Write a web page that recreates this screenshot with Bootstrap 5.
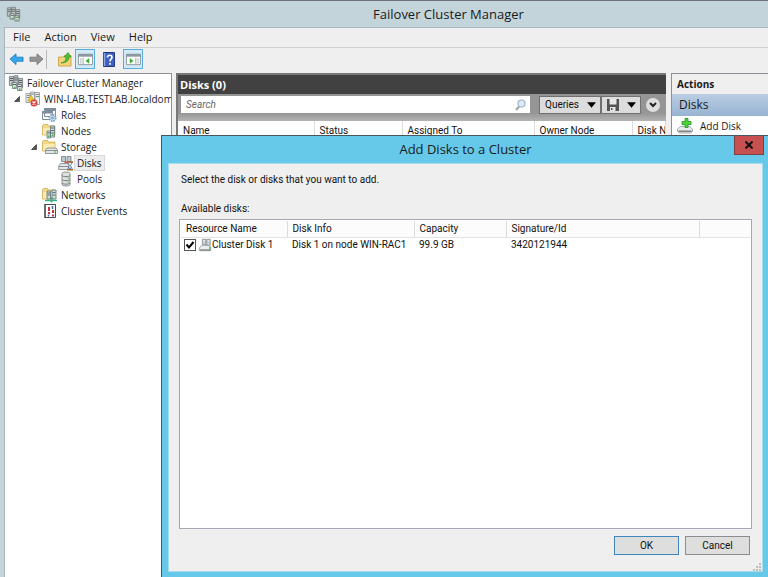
<!DOCTYPE html>
<html lang="en">
<head>
<meta charset="utf-8">
<meta name="viewport" content="width=device-width, initial-scale=1">
<title>Failover Cluster Manager</title>
<link href="https://cdn.jsdelivr.net/npm/bootstrap@5.3.0/dist/css/bootstrap.min.css" rel="stylesheet">
<style>
  body { font-family: "Open Sans", "Noto Sans", sans-serif; font-size: 11px; line-height: 16px; color: #1a1a1a; background: #c3d5db; }
  button, input { font: inherit; color: inherit; border-radius: 0; }
  svg { flex: none; display: block; }
  .classic { font-family: Roboto, "Liberation Sans", sans-serif; font-size: 10px; color: #111; }
  .app { border-top: 1px solid #6c7078; }
  .app-title { height: 26px; padding-left: 6px; }
  .app-title h1 { padding-left: 108px; }
  .app-title h1, .dlg-title h2 { font-size: 13px; line-height: 26px; }
  .app-body { margin-left: 4px; border: solid #a9b6bc; border-width: 1px 0 0 1px; background: #efefef; }
  .menu { height: 20px; border-bottom: 1px solid #d0d0d0; padding: 0 0 2px 8px; gap: 14px; }
  .menu button, .tools button { border: 0; background: none; padding: 0; }
  .tools { height: 25px; padding: 0 0 3px 1px; }
  .tools button { width: 20px; height: 20px; display: flex; align-items: center; justify-content: center; }
  .tools .pressed { border: 1px solid #56aee0; background: #d5e9f6; }
  .tools .rule { width: 1px; height: 19px; background: #b8b8b8; }
  .panes { gap: 4px; }
  .tree { width: 167px; flex: none; background: #fff; border: solid #8b9097; border-width: 1px 1px 0 0; padding: 1px 0 0 3px; font-size: 10px; }
  .tree a { display: flex; height: 16px; align-items: center; color: inherit; text-decoration: none; white-space: nowrap; }
  .tree a span { padding: 0 3px; }
  .tree .exp { width: 16px; }
  .tree .l1 { padding-left: 1px; }
  .tree .l2 { padding-left: 34px; }
  .tree .l2x { padding-left: 18px; }
  .tree .l3 { padding-left: 50px; }
  .tree .picked { background: #ededed; outline: 1px solid #d9d9d9; outline-offset: -1px; }
  .center { background: #9b9b9b; border: solid #777; border-width: 2px 0 0 2px; margin-right: 1px; }
  .center h2 { height: 19px; font-size: 11px; line-height: 19px; font-weight: 700; color: #fff; background: #414141; padding-left: 2px; }
  .filter { height: 27px; padding: 2px 6px 0 3px; background: linear-gradient(#959595 70%, #b4b4b4); }
  .filter .box { background: #fff; height: 17px; margin-right: 9px; }
  .filter input { border: 0; outline: 0; padding: 0 5px; min-width: 0; font-style: italic; background: none; }
  .filter input::placeholder { color: #666; }
  .filter button { height: 18px; border: 1px solid #707070; background: #dcdcdc; padding: 0 4px 0 5px; }
  .filter .round { width: 14px; height: 14px; border: 0; border-radius: 50%; padding: 0; margin: 2px 0 0 5px; background: #dedede; }
  .grid { table-layout: fixed; width: 100%; line-height: 14px; white-space: nowrap; }
  .grid th { font-weight: 400; height: 16px; padding: 0 5px; border-right: 1px solid #dcdcdc; border-bottom: 1px solid #e4e4e4; overflow: hidden; background: #fcfcfc; }
  .grid td { padding: 0 5px; }
  .grid td:first-child { padding-left: 3px; }
  .center .grid th { height: 20px; padding-top: 1px; background: #fff; }
  .cw1 { width: 136px; } .cw2 { width: 88px; } .cw3 { width: 132px; } .cw4 { width: 98px; }
  .dw1 { width: 106px; } .dw2 { width: 127px; } .dw3 { width: 92px; } .dw4 { width: 193px; }
  .actions { width: 97px; flex: none; background: #fff; border: solid #8b9097; border-width: 1px 0 0 1px; font-size: 10px; }
  .actions h2 { background: #efefef; height: 20px; line-height: 20px; font-size: 10px; font-weight: 700; padding-left: 5px; }
  .actions h3 { height: 22px; line-height: 22px; font-size: 12px; font-weight: 400; padding-left: 7px; background: linear-gradient(#bacde2, #98b3d3); }
  .actions button { border: 0; background: none; padding: 2px 0 0 5px; gap: 7px; }
  .dlg { position: absolute; left: 161px; top: 135px; right: 0; bottom: 0; background: #66c9e9; border: solid #46565e; border-width: 1px 0 0 1px; padding: 0 5px 5px 6px; }
  .dlg-title { height: 27px; }
  .dlg .close { position: absolute; right: 4px; top: 0; width: 30px; height: 19px; border: 1px solid #7c3f42; border-top: 0; background: #c75050; padding: 0; }
  .dlg-body { background: #efefef; border: 1px solid #a7dced; padding: 8px 10px 16px; }
  .dlg-body p { margin: 0 2px 13px; }
  .dlg-body .list-label { margin-bottom: 2px; }
  .list { background: #fff; border: 1px solid #a5a8b0; padding: 1px; }
  .list .check { appearance: none; flex: none; width: 12px; height: 12px; margin: 0 2px 0 0; border: 1px solid #555; background: #fff; }
  .list .check:checked { background: #fff url("data:image/svg+xml,%3Csvg xmlns='http://www.w3.org/2000/svg' viewBox='0 0 10 10'%3E%3Cpath d='M1.500 4.500L4 7.500 8.500 2' fill='none' stroke='black' stroke-width='2'/%3E%3C/svg%3E") center / 10px 10px no-repeat; }
  .dlg-foot { gap: 6px; margin-top: 7px; padding-right: 2px; }
  .dlg-btn { width: 65px; height: 19px; line-height: 17px; border: 1px solid #8c8c8c; background: #dedede; padding: 0; }
  .dlg-btn.ok { border-color: #3e87bd; }
  .grip { position: absolute; right: 7px; bottom: 6px; }
</style>
</head>
<body class="vh-100 overflow-hidden">

<svg class="d-none" aria-hidden="true">
  <symbol id="i-cluster" viewBox="0 0 16 16">
    <path fill="#c4c9c9" stroke="#687376" stroke-width=".8" d="M1.4 1.4h4v9h-4zM6 .8h4v9H6zM10.6 3.4h4v9h-4z"/>
    <path stroke="#566265" d="M2 3.5h3M2 5.5h3M6.500 3h3M6.500 5h3M11 5.500h3M11 7.500h3"/>
    <path fill="#d9dddd" stroke="#687376" stroke-width=".8" d="M4.400 7.500h4v6h-4zM9.500 9.500h4.500v6H9.500z"/>
    <path stroke="#566265" d="M5 9.500h3M10 11.500h3.500"/>
    <path fill="#46b33c" d="M3 8h1.500v1.500H3zM6 12h1.500v1.500H6zM11 13.500h1.500V15H11zM13 10h1v1.500h-1z"/>
  </symbol>
  <symbol id="i-clerr" viewBox="0 0 16 16">
    <path fill="#eef0f0" stroke="#8a9395" stroke-width=".8" d="M1 2.500h4v9H1zM5.500 1h4v9h-4zM10 1.500h4.500v12H10z"/>
    <path stroke="#7c8789" d="M2 4.500h2.500M2 6.500h2.500M6 3h3M11 3.500h3M11 5.500h3"/>
    <path fill="#f5c62e" stroke="#b8891a" stroke-width=".5" d="M6 4l3.500 6h-7z"/>
    <circle cx="9" cy="12" r="3.500" fill="#d8423c"/><path stroke="#fff" stroke-width="1.200" d="M7.500 10.500l3 3m0-3l-3 3"/>
  </symbol>
  <symbol id="i-roles" viewBox="0 0 16 16">
    <path fill="#fff" stroke="#7f8c98" d="M2.500 1.500h11v8h-11zM.5 4.500h10v8H.5z"/>
    <path fill="#7d8d9e" d="M2 1h12v3H2zM0 4h11v2.500H0z"/>
    <circle cx="10.500" cy="11" r="3.200" fill="#d7e6f2" stroke="#6f9abd" stroke-width="1.800" stroke-dasharray="1.500 1"/><circle cx="10.500" cy="11" r="1.400" fill="#7aa7cb"/>
  </symbol>
  <symbol id="i-folder" viewBox="0 0 16 16">
    <path fill="#f0d889" stroke="#cfac51" stroke-width=".8" d="M.5 2.500l1-1h4l1 1.500h6.500v9H.5z"/><path fill="#f9ebb2" d="M1 5h11.500v6.500H1z"/>
  </symbol>
  <symbol id="i-nodes" viewBox="0 0 16 16">
    <use href="#i-folder" width="16" height="16"/>
    <path fill="#cfdcd8" stroke="#63757a" stroke-width=".8" d="M8.500 3h4v11h-4zM5 8h3.500v7H5z"/><path stroke="#587078" d="M9 5h3M9 7.500h3M9 10h3M5.500 10h2.500"/><path fill="#3fb548" d="M10 11.500h1.500V13H10zM6 12.500h1.500V14H6z"/>
  </symbol>
  <symbol id="i-storage" viewBox="0 0 16 16">
    <use href="#i-folder" width="16" height="16"/>
    <path fill="#e1e3e4" stroke="#7c8386" stroke-width=".8" d="M5 9h9l1.500 2v3.500h-12V11z"/><path stroke="#8d9497" d="M4 11.500h11"/><path fill="#43b545" d="M12 12.500h2v1h-2z"/>
  </symbol>
  <symbol id="i-disks" viewBox="0 0 16 16">
    <path fill="#bfc8ce" stroke="#6c7a84" stroke-width=".8" d="M3.500 1.500h4v5h-4zM9 1.500h4v5H9z"/>
    <path fill="#e4e6e7" stroke="#777f84" stroke-width=".8" d="M2.500 8.500h7l1 2v4H.7V11z"/><path stroke="#858d91" d="M1 11.500h9"/>
    <path fill="#eef6fc" stroke="#416b98" stroke-width=".8" d="M9.500 7h5l-2 3.500 2 4h-5l2-4z"/><path stroke="#b0652b" stroke-width="1.400" d="M9 7h6M9 14.800h6"/><path fill="#4a93d6" d="M10.500 14l1.500-2 1.500 2z"/><path fill="#d54a33" d="M6.500 6.500h3V8h-3z"/>
  </symbol>
  <symbol id="i-pools" viewBox="0 0 16 16">
    <path fill="#dde0df" stroke="#737b7b" stroke-width=".8" d="M4 2.500c0-2 8-2 8 0v11c0 2-8 2-8 0z"/>
    <path fill="none" stroke="#737b7b" d="M4 4.500c0 1.500 8 1.500 8 0M4 8.500c0 1.500 8 1.500 8 0M4 12c0 1.500 8 1.500 8 0"/><path fill="#58b558" d="M9.500 6.500H11v1H9.500zM9.500 10.500H11v1H9.500z"/>
  </symbol>
  <symbol id="i-net" viewBox="0 0 16 16">
    <use href="#i-folder" width="16" height="16"/>
    <path fill="#cfdcd8" stroke="#5f7276" stroke-width=".8" d="M5 4h3.500v8H5zM10 3h4v9h-4z"/><path stroke="#587078" d="M5.500 6h2.500M5.500 8h2.500M10.500 5.500h3M10.500 8h3"/>
    <path stroke="#36b08b" stroke-width="1.600" d="M3 13.500h12M9.500 10v5.500"/>
  </symbol>
  <symbol id="i-events" viewBox="0 0 16 16">
    <path fill="#fff" stroke="#444b55" d="M3 1.500h10.500v13H3z"/><path stroke="#333" stroke-width="2" stroke-dasharray="1 1" d="M3 1.500v13"/>
    <path stroke="#c8323b" stroke-width="2" d="M7 4v4M7 9v2M11 7v3M11 11.500v2"/><path stroke="#4467b4" stroke-width="1.500" d="M10.500 3v3M6.500 11.500v2"/>
  </symbol>
  <symbol id="i-drive" viewBox="0 0 16 16">
    <path fill="#ccd2d4" stroke="#788286" stroke-width=".8" d="M5 1.500h4v6H5zM10 1.500h4v7h-4z"/><path stroke="#f5f5f5" d="M6 3h2M11 3h2"/>
    <path fill="#eceeee" stroke="#8b9295" stroke-width=".8" d="M4 8.500h8l2.500 2v4H1.500v-3z"/><path fill="#777f82" d="M2 13h12v1.500H2z"/><path fill="#45b545" d="M13 10h1.500v3H13z"/>
  </symbol>
  <symbol id="i-add" viewBox="0 0 16 16">
    <path fill="#e9eaeb" stroke="#92979a" stroke-width=".8" d="M3.500 8.500h9l3 2.500v2.500l-2 1.500h-11l-2-1.500V11z"/><path fill="#7d8386" d="M1.500 12.500h13v1.500h-13z"/>
    <path fill="#4ed33c" stroke="#25951f" stroke-width=".8" d="M8 .5h3v3h3v3h-3v3H8v-3H5v-3h3z"/>
  </symbol>
  <symbol id="i-arrow" viewBox="0 0 16 16"><path stroke-width=".8" d="M1 8l6.500-5.500V6H15v4.500H7.500V14z"/></symbol>
  <symbol id="i-pane" viewBox="0 0 16 16">
    <path fill="#fff" stroke="#8c959d" d="M.5 2.500h15v11H.5z"/><path fill="#8c99a5" d="M0 2h16v3H0z"/><path stroke="#9aa4ad" d="M5.500 6v7"/><path stroke="#aaa" d="M2 7.500h2M2 9.500h2M2 11.500h2"/><path fill="#3eae33" d="M12 6.500v6L8 9.500z"/>
  </symbol>
  <symbol id="i-down" viewBox="0 0 10 6"><path d="M0 0h10L5 6z"/></symbol>
  <symbol id="i-exp" viewBox="0 0 6 6"><path fill="#555" stroke="#222" stroke-width=".6" d="M5.500.5v5h-5z"/></symbol>
</svg>

<div class="app d-flex flex-column h-100">
  <header class="app-title d-flex align-items-center">
    <svg width="15" height="16"><use href="#i-cluster"/></svg>
    <h1 class="m-0 flex-grow-1 text-center fw-normal">Failover Cluster Manager</h1>
  </header>

  <div class="app-body flex-grow-1 d-flex flex-column">
    <nav class="menu d-flex align-items-center" aria-label="Menu bar">
      <button type="button">File</button><button type="button">Action</button><button type="button">View</button><button type="button">Help</button>
    </nav>
    <div class="tools d-flex align-items-center" role="toolbar" aria-label="Toolbar">
      <button type="button" aria-label="Back"><svg width="15" height="16" fill="#35a7ec" stroke="#1778bd"><use href="#i-arrow"/></svg></button>
      <button type="button" aria-label="Forward"><svg width="15" height="16" fill="#949494" stroke="#737373" viewBox="0 0 16 16"><path stroke-width=".8" d="M15 8L8.500 2.500V6H1v4.500h7.500V14z"/></svg></button>
      <span class="rule me-2"></span>
      <button type="button" aria-label="Up one level"><svg width="14" height="15" viewBox="0 0 14 15"><path fill="#f3d477" stroke="#c39b3c" stroke-width=".8" d="M.5 5h5l1-1.500H13V14H.5z"/><path fill="#52bd38" stroke="#2f8a22" stroke-width=".6" d="M3 11c4-1 5-3 5-6H6l4-4.500L13 5h-2c0 4-3 6-8 6z"/></svg></button>
      <button type="button" class="pressed" aria-label="Show console tree"><svg width="15" height="15"><use href="#i-pane"/></svg></button>
      <button type="button" class="ms-1 me-1" aria-label="Help"><svg width="12" height="15" viewBox="0 0 12 15"><path fill="#3d5fc4" stroke="#24397f" d="M.5.5h11v14H.5z"/><path stroke="#8fa6e4" stroke-width="1.500" d="M1.500 1v13"/><path fill="none" stroke="#fff" stroke-width="1.700" d="M4.500 5.500c0-3 4.500-3 4.500 0C9 7 7 7 7 9.500M7 11v1.800"/></svg></button>
      <button type="button" class="pressed" aria-label="Show action pane"><svg width="15" height="15" viewBox="0 0 16 16"><path fill="#fff" stroke="#8c959d" d="M.5 2.500h15v11H.5z"/><path fill="#8c99a5" d="M0 2h16v3H0z"/><path stroke="#9aa4ad" d="M10.500 6v7"/><path stroke="#aaa" d="M12 7.500h2M12 9.500h2M12 11.500h2"/><path fill="#3eae33" d="M4 6.500v6l4-3z"/></svg></button>
    </div>

    <div class="panes d-flex flex-grow-1">
      <nav class="tree overflow-hidden" aria-label="Console tree">
        <a href="#"><svg width="16" height="16"><use href="#i-cluster"/></svg><span>Failover Cluster Manager</span></a>
        <a href="#" class="l1"><svg class="exp" height="6"><use href="#i-exp"/></svg><svg width="16" height="16"><use href="#i-clerr"/></svg><span>WIN-LAB.TESTLAB.localdomain</span></a>
        <a href="#" class="l2"><svg width="16" height="16"><use href="#i-roles"/></svg><span>Roles</span></a>
        <a href="#" class="l2"><svg width="16" height="16"><use href="#i-nodes"/></svg><span>Nodes</span></a>
        <a href="#" class="l2x"><svg class="exp" height="6"><use href="#i-exp"/></svg><svg width="16" height="16"><use href="#i-storage"/></svg><span>Storage</span></a>
        <a href="#" class="l3"><svg width="16" height="16"><use href="#i-disks"/></svg><span class="picked">Disks</span></a>
        <a href="#" class="l3"><svg width="16" height="16"><use href="#i-pools"/></svg><span>Pools</span></a>
        <a href="#" class="l2"><svg width="16" height="16"><use href="#i-net"/></svg><span>Networks</span></a>
        <a href="#" class="l2"><svg width="16" height="16"><use href="#i-events"/></svg><span>Cluster Events</span></a>
      </nav>

      <main class="center flex-grow-1 overflow-hidden">
        <h2 class="m-0">Disks (0)</h2>
        <div class="filter classic d-flex align-items-start">
          <div class="box d-flex align-items-center flex-grow-1 overflow-hidden">
            <input class="flex-grow-1" type="text" placeholder="Search" aria-label="Search disks">
            <svg class="me-1" width="11" height="12" viewBox="0 0 11 12"><path stroke="#a4a4a4" stroke-width="2" d="M4.500 7L1 11"/><circle cx="6.500" cy="4.500" r="3.500" fill="#dcebf7" stroke="#9cb4c9" stroke-width="1.200"/></svg>
          </div>
          <div class="d-flex">
            <button type="button" class="d-flex align-items-center gap-2">Queries <svg width="9" height="6"><use href="#i-down"/></svg></button>
            <button type="button" class="d-flex align-items-center gap-2" aria-label="Save query"><svg width="12" height="12" viewBox="0 0 12 12"><path fill="#555" d="M0 0h12v12H0z"/><path fill="#e6e6e6" d="M2.500 0h7v5.500h-7zM3 8h5.500v4H3z"/><path fill="#555" d="M4 9h1.500v2H4z"/></svg><svg width="9" height="6"><use href="#i-down"/></svg></button>
          </div>
          <button type="button" class="round d-flex align-items-center justify-content-center" aria-label="Expand"><svg width="8" height="6" viewBox="0 0 8 6"><path fill="none" stroke="#222" stroke-width="2" d="M1 1l3 3 3-3"/></svg></button>
        </div>
        <table class="grid classic">
          <thead><tr><th class="cw1">Name</th><th class="cw2">Status</th><th class="cw3">Assigned To</th><th class="cw4">Owner Node</th><th>Disk Number</th></tr></thead>
        </table>
      </main>

      <aside class="actions">
        <h2 class="m-0">Actions</h2>
        <h3 class="m-0">Disks</h3>
        <button type="button" class="d-flex align-items-center"><svg width="16" height="16"><use href="#i-add"/></svg>Add Disk</button>
      </aside>
    </div>
  </div>
</div>

<section class="dlg d-flex flex-column" role="dialog" aria-labelledby="dlgTitle">
  <div class="dlg-title"><h2 id="dlgTitle" class="m-0 text-center fw-normal">Add Disks to a Cluster</h2></div>
  <button type="button" class="close d-flex align-items-center justify-content-center" aria-label="Close"><svg width="8" height="8" viewBox="0 0 8 8"><path stroke="#111" stroke-width="2" d="M.5.5l7 7m0-7l-7 7"/></svg></button>
  <div class="dlg-body classic flex-grow-1 d-flex flex-column">
    <p>Select the disk or disks that you want to add.</p>
    <p class="list-label">Available disks:</p>
    <div class="list flex-grow-1">
      <table class="grid" aria-label="Available disks">
        <thead><tr><th class="dw1">Resource Name</th><th class="dw2">Disk Info</th><th class="dw3">Capacity</th><th class="dw4">Signature/Id</th><th class="border-end-0"></th></tr></thead>
        <tbody><tr><td><label class="d-flex align-items-center"><input class="check" type="checkbox" checked><svg width="14" height="14"><use href="#i-drive"/></svg>Cluster Disk 1</label></td><td>Disk 1 on node WIN-RAC1</td><td>99.9 GB</td><td>3420121944</td><td></td></tr></tbody>
      </table>
    </div>
    <div class="dlg-foot d-flex justify-content-end">
      <button type="button" class="dlg-btn ok">OK</button>
      <button type="button" class="dlg-btn">Cancel</button>
    </div>
  </div>
  <svg class="grip" width="8" height="8" viewBox="0 0 8 8" fill="#bdbdbd"><path d="M6 0h2v2H6zM3 3h2v2H3zM6 3h2v2H6zM0 6h2v2H0zM3 6h2v2H3zM6 6h2v2H6z"/></svg>
</section>

<script src="https://cdn.jsdelivr.net/npm/bootstrap@5.3.0/dist/js/bootstrap.bundle.min.js"></script>
</body>
</html>
